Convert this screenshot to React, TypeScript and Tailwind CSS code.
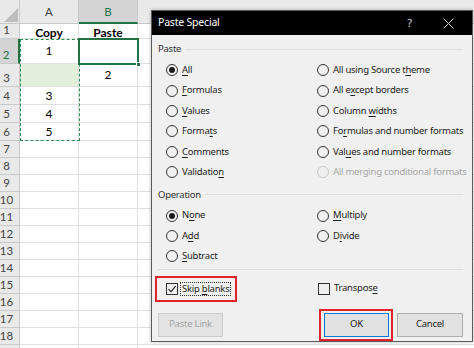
import React from 'react';

type Row = { n: number; h: string; a?: string; b?: string; bold?: boolean; sel?: boolean; green?: boolean; hide?: boolean };

const rows: Row[] = [
  { n: 1, h: 'h-[15px]', a: 'Copy', b: 'Paste', bold: true },
  { n: 2, h: 'h-[25px]', a: '1', sel: true },
  { n: 3, h: 'h-[23px]', b: '2', green: true },
  { n: 4, h: 'h-[18px]', a: '3' },
  { n: 5, h: 'h-[18px]', a: '4' },
  { n: 6, h: 'h-[18px]', a: '5' },
  { n: 7, h: 'h-[17px]' },
  { n: 8, h: 'h-[17px]' },
  { n: 9, h: 'h-[17px]' },
  { n: 10, h: 'h-[17px]' },
  { n: 11, h: 'h-[17px]' },
  { n: 12, h: 'h-[17px]' },
  { n: 13, h: 'h-[17px]' },
  { n: 14, h: 'h-[17px]' },
  { n: 15, h: 'h-[17px]' },
  { n: 16, h: 'h-[17px]' },
  { n: 17, h: 'h-[17px]' },
  { n: 18, h: 'h-[17px]' },
  { n: 19, h: 'h-[17px]', hide: true },
];

const Label = ({ t }: { t: string }) => {
  const i = t.indexOf('&');
  if (i < 0) return <>{t}</>;
  return (
    <>
      {t.slice(0, i)}
      <span className="underline underline-offset-[1.5px]">{t[i + 1]}</span>
      {t.slice(i + 2)}
    </>
  );
};

const Radio = ({ checked, disabled }: { checked?: boolean; disabled?: boolean }) => (
  <span
    className={`w-[12px] h-[12px] rounded-full border flex items-center justify-center shrink-0 ${
      disabled ? 'border-[#c8c8c8]' : 'border-[#333333]'
    }`}
  >
    {checked && <span className="w-[6px] h-[6px] rounded-full bg-[#1a1a1a]" />}
  </span>
);

const Option = ({ t, checked, disabled }: { t: string; checked?: boolean; disabled?: boolean }) => (
  <div className={`h-[20.4px] flex items-center pl-[8px] gap-[4px] ${disabled ? 'text-[#a6a6a6]' : 'text-[#1e1e1e]'}`}>
    <Radio checked={checked} disabled={disabled} />
    <span className="whitespace-nowrap">
      <Label t={t} />
    </span>
  </div>
);

const GroupLabel = ({ t }: { t: string }) => (
  <div className="h-[14px] flex items-center gap-[4px]">
    <span className="text-[#333333]">{t}</span>
    <span className="flex-1 h-px bg-[#dedede]" />
  </div>
);

const Checkbox = ({ checked }: { checked?: boolean }) => (
  <span className="w-[12px] h-[12px] border border-[#333333] shrink-0 flex items-center justify-center">
    {checked && (
      <svg width="10" height="10" viewBox="0 0 10 10">
        <path d="M1.5 5.2 L4 7.7 L8.7 2.2" fill="none" stroke="#222" strokeWidth="1.1" />
      </svg>
    )}
  </span>
);

export default function App() {
  return (
    <div className="relative w-[474px] h-[348px] overflow-hidden bg-white" style={{ fontFamily: 'Lato, "Liberation Sans", sans-serif' }}>
      {/* Spreadsheet */}
      <div className="flex flex-col">
        <div className="flex h-[24px]">
          <div className="relative w-[20px] shrink-0 bg-[#e9e9e9] border-r border-b border-[#c9c9c9]">
            <svg className="absolute left-[4px] top-[8px]" width="14" height="14" viewBox="0 0 14 14">
              <path d="M14 0 L14 14 L0 14 Z" fill="#bdbdbd" />
            </svg>
          </div>
          <div className="w-[59px] shrink-0 bg-[#e9e9e9] border-r border-b border-[#c9c9c9] flex items-end justify-center pb-[3px] text-[11.5px] text-[#444444]">
            A
          </div>
          <div className="w-[59px] shrink-0 bg-[#d4d4d4] border-r border-[#c9c9c9] border-b-2 border-b-[#217346] flex items-end justify-center pb-[2px] text-[11.5px] text-[#217346]">
            B
          </div>
          <div className="flex-1 bg-[#e9e9e9] border-b border-[#c9c9c9]" />
        </div>
        {rows.map((r) => (
          <div key={r.n} className={`flex shrink-0 ${r.h}`}>
            <div
              className={`w-[20px] shrink-0 flex items-end justify-center pr-[6px] pb-[1px] text-[11.5px] leading-[14px] border-b ${
                r.sel
                  ? 'bg-[#d4d4d4] text-[#217346] border-b-[#c9c9c9] border-r-2 border-r-[#217346]'
                  : 'bg-[#e9e9e9] text-[#444444] border-r border-[#c9c9c9]'
              }`}
            >
              {r.hide ? '' : r.n}
            </div>
            <div
              className={`w-[59px] shrink-0 border-r border-b border-[#e1e1e1] flex items-center justify-center text-[12px] text-black ${
                r.green ? 'bg-[#e2efda]' : ''
              } ${r.bold ? 'font-bold pt-[3px]' : ''}`}
            >
              {r.a}
            </div>
            <div
              className={`w-[59px] shrink-0 border-r border-b border-[#e1e1e1] flex items-center justify-center text-[12px] text-black ${
                r.bold ? 'font-bold pt-[3px]' : ''
              }`}
            >
              {r.b}
            </div>
            <div className="flex-1 border-b border-[#e1e1e1]" />
          </div>
        ))}
      </div>

      {/* marching ants around A2:A6 */}
      <div className="absolute left-[20px] top-[39px] w-[60px] h-[102px] border-[1.5px] border-dashed border-[#2e8b57]" />
      {/* active cell B2 */}
      <div className="absolute left-[78px] top-[38px] w-[61px] h-[27px] border-2 border-[#217346]">
        <div className="absolute right-[-4px] bottom-[-4px] w-[5px] h-[5px] bg-[#217346] border border-white" />
      </div>

      {/* Dialog */}
      <div
        className="absolute left-[151px] top-[10px] w-[322px] h-[332px] bg-[#f0f0f0] border border-[#5a5a5a] flex flex-col shadow-[0_0_4px_rgba(0,0,0,0.25)]"
        style={{ fontFamily: '"Noto Sans", "Open Sans", sans-serif' }}
      >
        <div className="h-[24px] shrink-0 bg-black flex items-center pl-[6px] pr-[18px]">
          <span className="text-white text-[10.5px] tracking-[-0.2px]">Paste Special</span>
          <span className="flex-1" />
          <span className="text-[#d8d8d8] text-[11px] mr-[31px]">?</span>
          <svg width="11" height="11" viewBox="0 0 11 11">
            <path d="M0.5 0.5 L10.5 10.5 M10.5 0.5 L0.5 10.5" stroke="#cfcfcf" strokeWidth="1" />
          </svg>
        </div>

        <div className="flex flex-col pl-[6px] pr-[9px] pt-[7px] text-[9.5px] tracking-[-0.25px]">
          <GroupLabel t="Paste" />
          <div className="grid grid-cols-[151px_1fr] grid-flow-col grid-rows-6 mt-[4px]">
            <Option t="&All" checked />
            <Option t="&Formulas" />
            <Option t="&Values" />
            <Option t="Forma&ts" />
            <Option t="&Comments" />
            <Option t="Validatio&n" />
            <Option t="All using Source t&heme" />
            <Option t="All e&xcept borders" />
            <Option t="Column &widths" />
            <Option t="Fo&rmulas and number formats" />
            <Option t="Val&ues and number formats" />
            <Option t="All merging conditional formats" disabled />
          </div>

          <div className="mt-[5.5px]">
            <GroupLabel t="Operation" />
          </div>
          <div className="grid grid-cols-[151px_1fr] grid-flow-col grid-rows-3 mt-[3.5px]">
            <Option t="N&one" checked />
            <Option t="A&dd" />
            <Option t="&Subtract" />
            <Option t="&Multiply" />
            <Option t="D&ivide" />
          </div>

          <div className="h-px bg-[#dedede] mt-[2px]" />

          <div className="grid grid-cols-[151px_1fr] mt-[9px] h-[20px] text-[#1e1e1e]">
            <div className="relative flex items-center pl-[8px] gap-[2px]">
              <Checkbox checked />
              <span className="border border-dotted border-[#333333] px-[1px] leading-[12px] whitespace-nowrap">
                Skip <Label t="&blanks" />
              </span>
              <div className="absolute left-[-3px] top-[-3px] w-[82px] h-[26px] border-2 border-[#e0242c]" />
            </div>
            <div className="flex items-center pl-[9px] gap-[4px]">
              <Checkbox />
              <span className="whitespace-nowrap">
                <Label t="Transpos&e" />
              </span>
            </div>
          </div>

          <div className="flex mt-[14px] h-[24px]">
            <div className="w-[65px] flex items-center justify-center bg-[#e3e3e3] border border-[#cccccc] text-[#a3a3a3]">
              Paste Link
            </div>
            <span className="flex-1" />
            <div className="relative w-[65px] flex items-center justify-center bg-[#e1e1e1] border border-[#0078d7] text-[#1e1e1e]">
              OK
              <div className="absolute left-[-6px] top-[-5px] w-[74px] h-[32px] border-2 border-[#e0242c]" />
            </div>
            <div className="w-[66px] ml-[8px] flex items-center justify-center bg-[#e1e1e1] border border-[#adadad] text-[#1e1e1e]">
              Cancel
            </div>
          </div>
        </div>
      </div>
    </div>
  );
}
